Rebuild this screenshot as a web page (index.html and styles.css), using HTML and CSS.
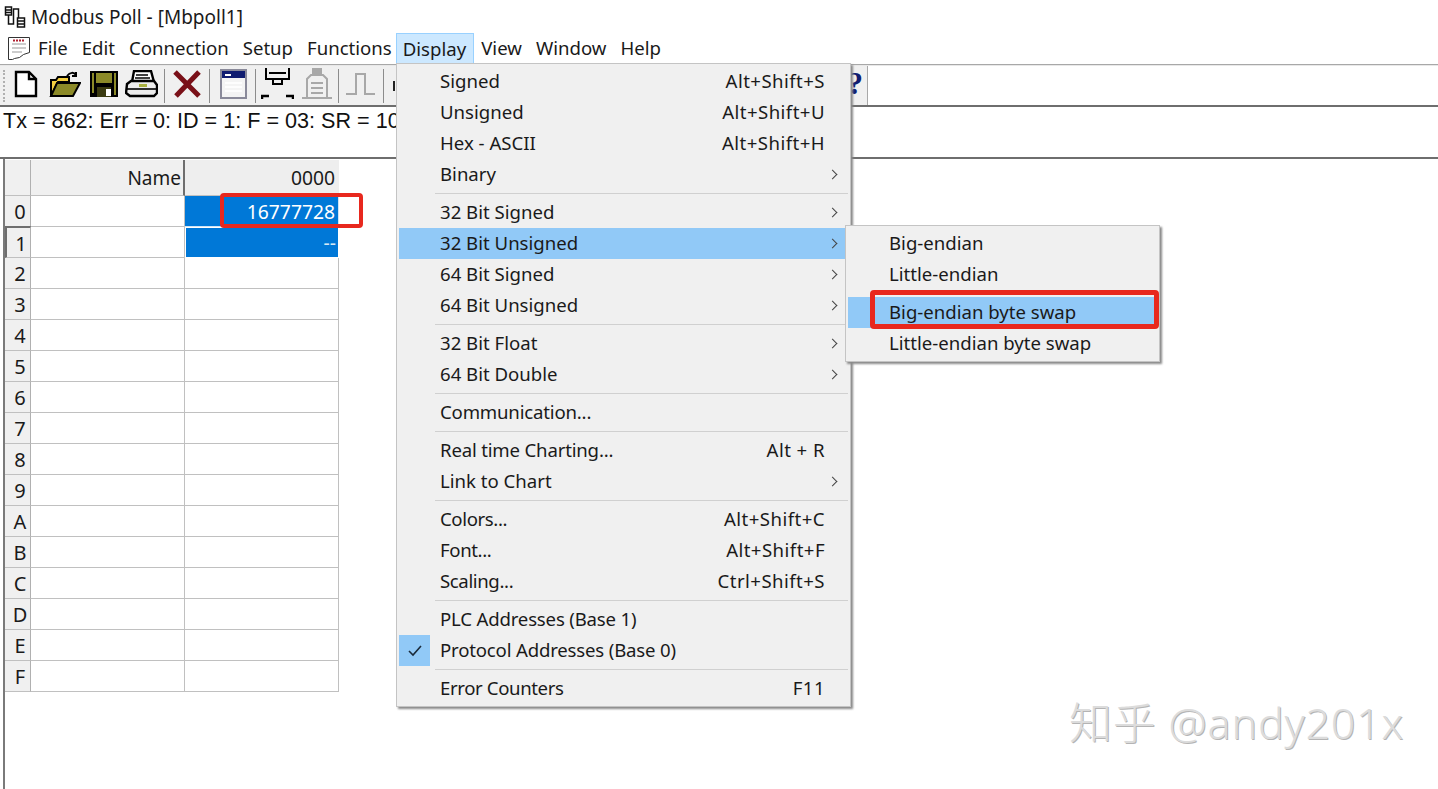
FILE: index.html
```html
<!DOCTYPE html>
<html lang="en">
<head>
  <meta charset="UTF-8" />
  <title>Modbus Poll - [Mbpoll1]</title>
  <link rel="stylesheet" href="styles.css">
</head>
<body>
  <!-- Title bar -->
  <div class="title-bar">
    <svg class="title-icon" width="22" height="24" viewBox="0 0 22 24" fill="none" stroke="#111" stroke-width="1.5">
      <rect x="1.5" y="2" width="6" height="8" fill="#fff"/>
      <path d="M1.5 5h6M1.5 7.5h6M4.5 10v9h5V4h5v9"/>
      <rect x="13.5" y="13" width="7" height="9" fill="#fff"/>
      <path d="M13.5 16h7M13.5 19h7"/>
    </svg>
    <span>Modbus Poll - [Mbpoll1]</span>
  </div>

  <!-- Menu bar -->
  <div class="menu-bar">
    <svg class="menu-doc" width="24" height="25" viewBox="0 0 24 25" fill="#fff" stroke="#333">
      <path d="M1.5 1.5h21v15l-6 2-4 3-5 1-2 1h-4z"/>
      <path d="M5 8h14M5 12h14M5 16h10" stroke="#999"/>
      <path d="M6 4.5h12" stroke="#b02030" stroke-width="2" stroke-dasharray="2 1"/>
    </svg>
    <span class="menu-title">File</span>
    <span class="menu-title">Edit</span>
    <span class="menu-title">Connection</span>
    <span class="menu-title">Setup</span>
    <span class="menu-title">Functions</span>
    <span class="menu-title open">Display</span>
    <span class="menu-title">View</span>
    <span class="menu-title">Window</span>
    <span class="menu-title">Help</span>
  </div>

  <!-- Toolbar -->
  <div class="toolbar-row">
    <div class="toolbar">
      <div class="grip"></div>
      <svg class="tool tool-new" width="24" height="28" viewBox="0 0 24 28" fill="#fff" stroke="#000" stroke-width="2.4">
        <path d="M2 2h13l7 7v17H2z"/><path d="M15 2v7h7" fill="none"/>
      </svg>
      <svg class="tool tool-open" width="32" height="28" viewBox="0 0 32 28">
        <path d="M2 10h5l2-3h11v5H9L2 26z" fill="#f5d040" stroke="#000" stroke-width="2"/>
        <path d="M2 26l6-13h23l-7 13z" fill="#8c8a28" stroke="#000" stroke-width="2"/>
        <path d="M18 6c3-4 7-4 9-1M27 2v4h-4" fill="none" stroke="#000" stroke-width="2"/>
      </svg>
      <svg class="tool tool-save" width="30" height="28" viewBox="0 0 30 28">
        <rect x="1" y="1" width="28" height="26" fill="#000"/>
        <rect x="7" y="3" width="16" height="10" fill="#8c8a28"/>
        <rect x="3" y="3" width="2" height="20" fill="#8c8a28"/>
        <rect x="25" y="3" width="2" height="22" fill="#8c8a28"/>
        <rect x="8" y="17" width="14" height="10" fill="#3a3a10"/>
        <rect x="17" y="19" width="5" height="7" fill="#fff"/>
      </svg>
      <svg class="tool tool-print" width="33" height="28" viewBox="0 0 33 28" stroke="#000" stroke-width="2.4">
        <path d="M9 1h17l3 11H7z" fill="#fff"/>
        <path d="M11 5h12M10 8h15" stroke-width="1.6"/>
        <path d="M2 14l4-3h23l3 4v8l-3 3H5l-4-3z" fill="#ececec"/>
        <path d="M2 19h29" stroke-width="1.6"/>
        <rect x="14" y="14" width="8" height="3" fill="#a8b040" stroke="none"/>
      </svg>
      <div class="tool-sep sep-a"></div>
      <svg class="tool tool-delete" width="30" height="28" viewBox="0 0 30 28" stroke="#7a1018" stroke-width="5">
        <path d="M3 2l24 24M27 2L4 26" fill="none"/>
      </svg>
      <div class="tool-sep sep-b"></div>
      <svg class="tool tool-window" width="27" height="30" viewBox="0 0 27 30">
        <rect x="1" y="1" width="25" height="28" fill="#f4f4f4" stroke="#8a8a9a" stroke-width="2"/>
        <rect x="2" y="2" width="23" height="7" fill="#101c70"/>
        <rect x="5" y="5" width="6" height="2" fill="#fff"/>
        <path d="M5 14h17M5 18h17M5 22h17" stroke="#fff" stroke-width="1.5"/>
      </svg>
      <div class="tool-sep sep-c"></div>
      <svg class="tool tool-net" width="33" height="32" viewBox="0 0 33 32" fill="none" stroke="#000" stroke-width="2">
        <path d="M5 0v11h23V0M8 5h17M12 11v5h9v-5"/>
        <path d="M1 31v-3h7M32 31v-3h-7" stroke-width="2.5"/>
      </svg>
      <svg class="tool tool-idle" width="32" height="32" viewBox="0 0 32 32" fill="none" stroke="#a8a8a8" stroke-width="2">
        <rect x="12" y="1" width="8" height="6" fill="#a8a8a8"/>
        <path d="M6 30V11l4-4h12l4 4v19zM10 15h12M10 20h12M10 25h12M1 30h30"/>
      </svg>
      <div class="tool-sep sep-d"></div>
      <svg class="tool tool-pulse" width="29" height="24" viewBox="0 0 29 24" fill="none" stroke="#a8a8a8" stroke-width="2">
        <path d="M0 22h10V2h9v20h10"/>
      </svg>
      <div class="tool-sep sep-e"></div>
      <div class="tool-stub"></div>
      <span class="help-mark">?</span>
    </div>
  </div>

  <!-- Status -->
  <div class="status-box">Tx = 862: Err = 0: ID = 1: F = 03: SR = 1000ms</div>

  <!-- Data grid -->
  <div class="main-area">
    <div class="data-grid">
      <div class="head corner"></div>
      <div class="head name-head">Name</div>
      <div class="head col-head">0000</div>

      <div class="row-head">0</div><div class="cell"></div><div class="cell picked">16777728</div>
      <div class="row-head current">1</div><div class="cell"></div><div class="cell picked inset">--</div>
      <div class="row-head">2</div><div class="cell"></div><div class="cell"></div>
      <div class="row-head">3</div><div class="cell"></div><div class="cell"></div>
      <div class="row-head">4</div><div class="cell"></div><div class="cell"></div>
      <div class="row-head">5</div><div class="cell"></div><div class="cell"></div>
      <div class="row-head">6</div><div class="cell"></div><div class="cell"></div>
      <div class="row-head">7</div><div class="cell"></div><div class="cell"></div>
      <div class="row-head">8</div><div class="cell"></div><div class="cell"></div>
      <div class="row-head">9</div><div class="cell"></div><div class="cell"></div>
      <div class="row-head">A</div><div class="cell"></div><div class="cell"></div>
      <div class="row-head">B</div><div class="cell"></div><div class="cell"></div>
      <div class="row-head">C</div><div class="cell"></div><div class="cell"></div>
      <div class="row-head">D</div><div class="cell"></div><div class="cell"></div>
      <div class="row-head">E</div><div class="cell"></div><div class="cell"></div>
      <div class="row-head">F</div><div class="cell"></div><div class="cell"></div>
    </div>
  </div>

  <!-- Display menu -->
  <div class="popup display-menu">
    <div class="item"><span>Signed</span><span class="keys">Alt+Shift+S</span></div>
    <div class="item"><span>Unsigned</span><span class="keys">Alt+Shift+U</span></div>
    <div class="item"><span>Hex - ASCII</span><span class="keys">Alt+Shift+H</span></div>
    <div class="item more"><span>Binary</span></div>
    <div class="sep"></div>
    <div class="item more"><span>32 Bit Signed</span></div>
    <div class="item more active"><span>32 Bit Unsigned</span></div>
    <div class="item more"><span>64 Bit Signed</span></div>
    <div class="item more"><span>64 Bit Unsigned</span></div>
    <div class="sep"></div>
    <div class="item more"><span>32 Bit Float</span></div>
    <div class="item more"><span>64 Bit Double</span></div>
    <div class="sep"></div>
    <div class="item"><span class="tight">Communication...</span></div>
    <div class="sep"></div>
    <div class="item"><span class="tight">Real time Charting...</span><span class="keys">Alt + R</span></div>
    <div class="item more"><span>Link to Chart</span></div>
    <div class="sep"></div>
    <div class="item"><span class="tighter">Colors...</span><span class="keys">Alt+Shift+C</span></div>
    <div class="item"><span class="tighter">Font...</span><span class="keys">Alt+Shift+F</span></div>
    <div class="item"><span class="tighter">Scaling...</span><span class="keys">Ctrl+Shift+S</span></div>
    <div class="sep"></div>
    <div class="item"><span class="tight">PLC Addresses (Base 1)</span></div>
    <div class="item checked">
      <svg class="check-mark" width="31" height="31" viewBox="0 0 31 31" fill="none" stroke="#1a2a3a" stroke-width="1.6">
        <path d="M10 16l4 4 8-9"/>
      </svg>
      <span class="tight">Protocol Addresses (Base 0)</span>
    </div>
    <div class="sep"></div>
    <div class="item"><span class="tighter">Error Counters</span><span class="keys">F11</span></div>
  </div>

  <!-- 32 Bit Unsigned submenu -->
  <div class="popup sub-menu">
    <div class="item"><span>Big-endian</span></div>
    <div class="item"><span>Little-endian</span></div>
    <div class="sep"></div>
    <div class="item active"><span>Big-endian byte swap</span></div>
    <div class="item"><span>Little-endian byte swap</span></div>
  </div>

  <div class="red-mark value-mark"></div>
  <div class="red-mark swap-mark"></div>

  <div class="watermark">知乎 @andy201x</div>
</body>
</html>
```

FILE: styles.css
```css
html, body {
  margin: 0;
  height: 789px;
  overflow: hidden;
}

body {
  position: relative;
  display: flex;
  flex-direction: column;
  font-family: 'Noto Sans', sans-serif;
  font-size: 18.6px;
  color: #1a1a1a;
  background: #fff;
}

.title-bar {
  display: flex;
  align-items: center;
  height: 33px;
  padding-left: 4px;
  gap: 5px;
  font-size: 19px;
}

.menu-bar {
  display: flex;
  align-items: center;
  height: 31px;
  padding-left: 7px;
  border-bottom: 1px solid #a8a8a8;
}

.menu-title {
  padding: 0 7px 2px;
  line-height: 29px;
  box-sizing: border-box;
}

.menu-title.open {
  margin-left: -3px;
  padding: 0 7px 0 6px;
  background: #cce8ff;
  border: 1px solid #99d1ff;
  border-bottom: none;
  line-height: 29px;
  height: 31px;
}

.toolbar-row {
  height: 39px;
  border-top: 1px solid #e8e8e8;
  border-bottom: 2px solid #6e6e6e;
}

.toolbar {
  display: flex;
  align-items: center;
  box-sizing: border-box;
  width: 868px;
  height: 39px;
  padding-bottom: 4px;
  background: #f0f0f0;
  border-right: 1px solid #a8a8a8;
}

.grip {
  width: 2px;
  height: 32px;
  margin: 4px 0 0 3px;
  border-left: 2px dotted #b0b0b0;
}

.tool {
  flex: none;
}

.tool-new { margin-left: 7px; }
.tool-open { margin-left: 11px; }
.tool-save { margin-left: 8px; }
.tool-print { margin-left: 6px; }
.tool-delete { margin-left: 7px; }
.tool-window { margin-left: 10px; }
.tool-net { margin-left: 5px; }
.tool-idle { margin-left: 7px; }
.tool-pulse { margin-left: 7px; }

.tool-sep {
  flex: none;
  width: 1px;
  height: 34px;
  margin-top: 4px;
  background: #8c8c8c;
}

.sep-a { margin-left: 6px; }
.sep-b { margin-left: 7px; }
.sep-c { margin-left: 8px; }
.sep-d { margin-left: 5px; }
.sep-e { margin-left: 8px; }

.tool-stub {
  width: 2px;
  height: 10px;
  margin: 4px 0 0 9px;
  background: #222;
}

.help-mark {
  margin-left: auto;
  margin-right: 4px;
  font: bold 31px 'Liberation Serif', serif;
  color: #101c70;
}

.status-box {
  height: 50px;
  padding-left: 3px;
  border-bottom: 2px solid #6e6e6e;
  font-family: 'Liberation Sans', Arial, sans-serif;
  font-size: 21.6px;
  line-height: 27px;
  color: #111;
  white-space: nowrap;
  overflow: hidden;
}

.main-area {
  flex: 1;
  margin-left: 3px;
  padding-top: 1px;
  border-left: 2px solid #7a7a7a;
}

.data-grid {
  display: grid;
  grid-template-columns: 26px 154px 154px;
  grid-template-rows: 36px repeat(16, 31px);
  width: 334px;
  font-size: 19.3px;
}

.head {
  display: flex;
  align-items: center;
  justify-content: flex-end;
  box-sizing: border-box;
  padding-right: 4px;
  background: #f0f0f0;
  border-bottom: 1px solid #c0c0c0;
}

.corner {
  border-right: 1px solid #b0b0b0;
}

.name-head {
  padding-right: 2px;
  font-size: 19px;
  border-right: 2px solid #6e6e6e;
}

.col-head {
  background: #eeeeee;
}

.row-head {
  display: flex;
  align-items: center;
  justify-content: center;
  box-sizing: border-box;
  padding: 1px 0 0 5px;
  background: #f0f0f0;
  border-bottom: 1px solid #c0c0c0;
  border-right: 1px solid #b0b0b0;
  font-size: 20px;
}

.row-head.current {
  border-top: 2px solid #6e6e6e;
  border-left: 2px solid #6e6e6e;
  margin-top: -1px;
}

.cell {
  display: flex;
  align-items: center;
  justify-content: flex-end;
  box-sizing: border-box;
  padding-right: 3px;
  border-bottom: 1px solid #c0c0c0;
  border-right: 1px solid #c0c0c0;
}

.cell.picked {
  background: #0078d7;
  color: #fff;
  border-color: #cfe4f5;
}

.cell.inset {
  padding-right: 2px;
  border: 1px solid #fff;
  color: #d8e8f5;
}

.popup {
  position: absolute;
  box-sizing: border-box;
  padding: 2px;
  background: #f0f0f0;
  border: 1px solid #c4c4c4;
  box-shadow: 2px 2px 2px #8a8a8a;
}

.display-menu {
  left: 396px;
  top: 63px;
  width: 455px;
  height: 644px;
}

.sub-menu {
  left: 845px;
  top: 225px;
  width: 315px;
  height: 137px;
}

.item {
  position: relative;
  display: flex;
  justify-content: space-between;
  align-items: center;
  box-sizing: border-box;
  height: 31px;
  padding: 0 23px 2px 41px;
}

.keys {
  letter-spacing: 0.45px;
}

.tight {
  letter-spacing: -0.18px;
}

.tighter {
  letter-spacing: -0.38px;
}

.more::after {
  content: "";
  position: absolute;
  right: 12px;
  top: 12px;
  width: 6px;
  height: 6px;
  border-top: 1px solid #444;
  border-right: 1px solid #444;
  transform: rotate(45deg);
}

.item.active {
  background: #91c9f7;
}

.check-mark {
  position: absolute;
  left: 0;
  top: 0;
  background: #91c9f7;
}

.sep {
  height: 1px;
  margin: 3px 0 3px 36px;
  background: #d0d0d0;
}

.red-mark {
  position: absolute;
  box-sizing: border-box;
  border: 4px solid #e8281e;
  border-radius: 4px;
}

.value-mark {
  left: 220px;
  top: 193px;
  width: 143px;
  height: 35px;
}

.swap-mark {
  left: 870px;
  top: 290px;
  width: 289px;
  height: 39px;
  border-width: 5px;
}

.watermark {
  position: absolute;
  left: 1069px;
  top: 695px;
  font-family: 'Noto Sans', 'Noto Sans CJK SC', sans-serif;
  font-size: 43px;
  font-weight: 300;
  line-height: 56px;
  letter-spacing: 0.8px;
  color: #dcdcdc;
  text-shadow: 1px 1px 0 #b4b4b4;
  white-space: nowrap;
}
```
